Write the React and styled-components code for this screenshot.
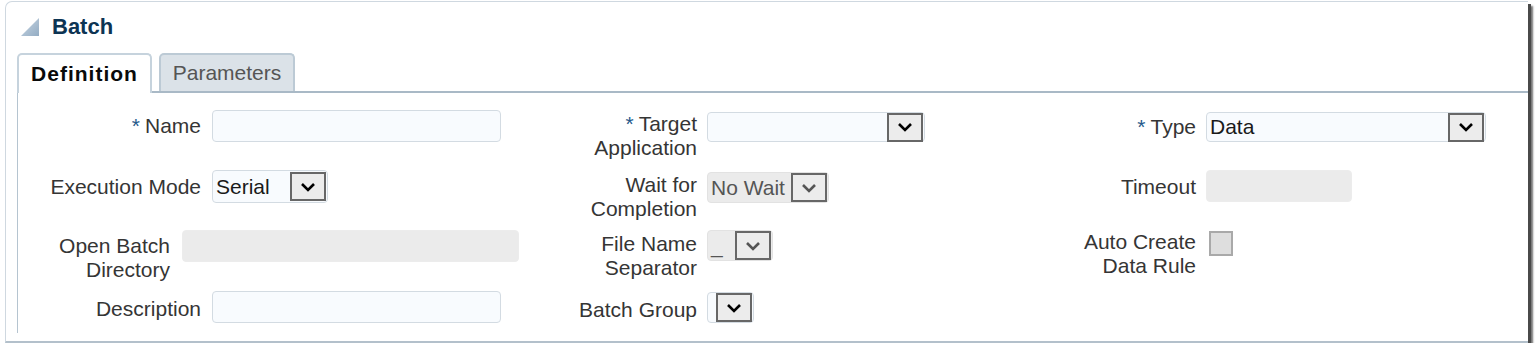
import styled, { createGlobalStyle } from "styled-components";

const GlobalStyle = createGlobalStyle`
  body {
    margin: 0;
    background: #ffffff;
    font-family: "Liberation Sans", Arial, sans-serif;
  }
`;

const Frame = styled.div`
  margin: 1px 0 0 5px;
  width: 1522px;
  height: 339px;
  border-top: 1px solid #cfd8e0;
  border-left: 1px solid #cfd8e0;
  border-bottom: 2px solid #b3c0cb;
  border-top-left-radius: 7px;
  background: #ffffff;
  box-shadow: 3px 3px 0 #4a4a4a, 5px 5px 2px rgba(0, 0, 0, 0.55);
  display: flex;
  flex-direction: column;
  overflow: hidden;
`;

const Header = styled.div`
  display: flex;
  align-items: center;
  gap: 12px;
  height: 50px;
  flex-shrink: 0;
  padding: 0 0 0 14px;
`;

const Title = styled.h2`
  margin: 0;
  font-size: 22px;
  font-weight: bold;
  color: #0d3453;
`;

const TabStrip = styled.div`
  display: flex;
  gap: 7px;
  padding-left: 11px;
  height: 39px;
  flex-shrink: 0;
  align-items: flex-end;
`;

const Tab = styled.div`
  height: ${(p) => (p.$active ? "40px" : "38px")};
  box-sizing: border-box;
  width: ${(p) => p.$w}px;
  display: flex;
  align-items: center;
  justify-content: center;
  border: 2px solid ${(p) => (p.$active ? "#c6d3dd" : "#bccad5")};
  border-bottom: none;
  border-radius: 5px 5px 0 0;
  background: ${(p) => (p.$active ? "#ffffff" : "#dbe2e8")};
  color: ${(p) => (p.$active ? "#0a0a0a" : "#555555")};
  font-size: 21px;
  font-weight: ${(p) => (p.$active ? "bold" : "normal")};
  letter-spacing: ${(p) => (p.$active ? "1px" : "0")};
  margin-bottom: ${(p) => (p.$active ? "-2px" : "0")};
  position: relative;
  z-index: 1;
`;

const Content = styled.div`
  margin-left: 11px;
  flex: 1;
  min-height: 0;
  margin-bottom: 8px;
  border-top: 2px solid #a9b9c6;
  border-left: 1px solid #b5c4d0;
  padding-top: 17px;
  display: flex;
`;

const Column = styled.div`
  width: ${(p) => p.$w}px;
  display: grid;
  grid-template-rows: 60px 60px 60px auto;
  align-content: start;
  flex-shrink: 0;
`;

const Row = styled.div`
  display: flex;
  align-items: flex-start;
  gap: ${(p) => p.$gap || 10}px;
  padding-top: ${(p) => p.$top || 0}px;
`;

const Label = styled.div`
  width: ${(p) => p.$w}px;
  flex-shrink: 0;
  text-align: right;
  font-size: 21px;
  line-height: 24px;
  color: #353535;
  padding-top: ${(p) => p.$pt ?? 4}px;
`;

const Star = styled.span`
  color: #25598a;
  margin-right: 5px;
`;

const TextInput = styled.div`
  width: ${(p) => p.$w}px;
  height: ${(p) => p.$h || 32}px;
  box-sizing: border-box;
  border: 1px solid ${(p) => (p.$disabled ? "#ececec" : "#d3dbe2")};
  border-radius: 4px;
  background: ${(p) => (p.$disabled ? "#ebebeb" : "#f8fbfe")};
`;

const SelectBox = styled.div`
  width: ${(p) => p.$w}px;
  height: ${(p) => p.$h || 32}px;
  box-sizing: border-box;
  border: 1px solid ${(p) => (p.$disabled ? "#e2e2e2" : "#d3dbe2")};
  border-radius: 4px;
  background: ${(p) => (p.$disabled ? "#ebebeb" : "#f8fbfe")};
  display: flex;
  align-items: center;
`;

const SelectText = styled.span`
  flex: 1;
  padding-left: 3px;
  font-size: 21px;
  color: ${(p) => (p.$disabled ? "#555555" : "#1a1a1a")};
  white-space: nowrap;
  overflow: hidden;
`;

const DropButton = styled.div`
  width: 36px;
  height: 29px;
  box-sizing: border-box;
  margin-right: 1px;
  border: 2px solid #676767;
  background: #ececec;
  display: flex;
  align-items: center;
  justify-content: center;
`;

const CheckBox = styled.div`
  width: 24px;
  height: 25px;
  box-sizing: border-box;
  margin-left: 3px;
  margin-top: 1px;
  border: 2px solid #a9a9a9;
  background: #dedede;
`;

function Chevron({ disabled }) {
  return (
    <svg width="18" height="12" viewBox="0 0 18 12">
      <path
        d="M3 3 L9 9 L15 3"
        fill="none"
        stroke={disabled ? "#555555" : "#000000"}
        strokeWidth="2.6"
      />
    </svg>
  );
}

function Select({ w, h, value, disabled }) {
  return (
    <SelectBox $w={w} $h={h} $disabled={disabled}>
      <SelectText $disabled={disabled}>{value}</SelectText>
      <DropButton>
        <Chevron disabled={disabled} />
      </DropButton>
    </SelectBox>
  );
}

function CollapseIcon() {
  return (
    <svg width="20" height="20" viewBox="0 0 20 20">
      <defs>
        <linearGradient id="tri" x1="0" y1="0" x2="1" y2="1">
          <stop offset="0" stopColor="#c9d7e4" />
          <stop offset="1" stopColor="#93acc3" />
        </linearGradient>
      </defs>
      <path d="M1 19 L19 1 L19 19 Z" fill="url(#tri)" />
    </svg>
  );
}

function App() {
  return (
    <>
      <GlobalStyle />
      <Frame>
        <Header>
          <CollapseIcon />
          <Title>Batch</Title>
        </Header>
        <TabStrip>
          <Tab $active $w={135}>
            Definition
          </Tab>
          <Tab $w={136}>Parameters</Tab>
        </TabStrip>
        <Content>
          <Column $w={512}>
            <Row $gap={11}>
              <Label $w={183}>
                <Star>*</Star>Name
              </Label>
              <TextInput $w={289} />
            </Row>
            <Row $gap={11}>
              <Label $w={183} $pt={5}>
                Execution Mode
              </Label>
              <Select w={116} h={33} value="Serial" />
            </Row>
            <Row $gap={12}>
              <Label $w={152}>
                Open Batch
                <br />
                Directory
              </Label>
              <TextInput $w={337} $disabled />
            </Row>
            <Row $gap={11} $top={1}>
              <Label $w={183} $pt={6}>
                Description
              </Label>
              <TextInput $w={289} />
            </Row>
          </Column>
          <Column $w={510}>
            <Row $top={2}>
              <Label $w={167} $pt={0}>
                <Star>*</Star>Target
                <br />
                Application
              </Label>
              <Select w={218} h={30} value="" />
            </Row>
            <Row $top={2}>
              <Label $w={167} $pt={1}>
                Wait for
                <br />
                Completion
              </Label>
              <Select w={122} h={31} value="No Wait" disabled />
            </Row>
            <Row>
              <Label $w={167} $pt={2}>
                File Name
                <br />
                Separator
              </Label>
              <Select w={66} h={31} value="_" disabled />
            </Row>
            <Row $top={2}>
              <Label $w={167} $pt={6}>
                Batch Group
              </Label>
              <Select w={47} h={31} value="" />
            </Row>
          </Column>
          <Column $w={480}>
            <Row $top={2}>
              <Label $w={156} $pt={3}>
                <Star>*</Star>Type
              </Label>
              <Select w={280} h={30} value="Data" />
            </Row>
            <Row>
              <Label $w={156} $pt={5}>
                Timeout
              </Label>
              <TextInput $w={146} $disabled />
            </Row>
            <Row>
              <Label $w={156} $pt={0}>
                Auto Create
                <br />
                Data Rule
              </Label>
              <CheckBox />
            </Row>
          </Column>
        </Content>
      </Frame>
    </>
  );
}

export default App;
